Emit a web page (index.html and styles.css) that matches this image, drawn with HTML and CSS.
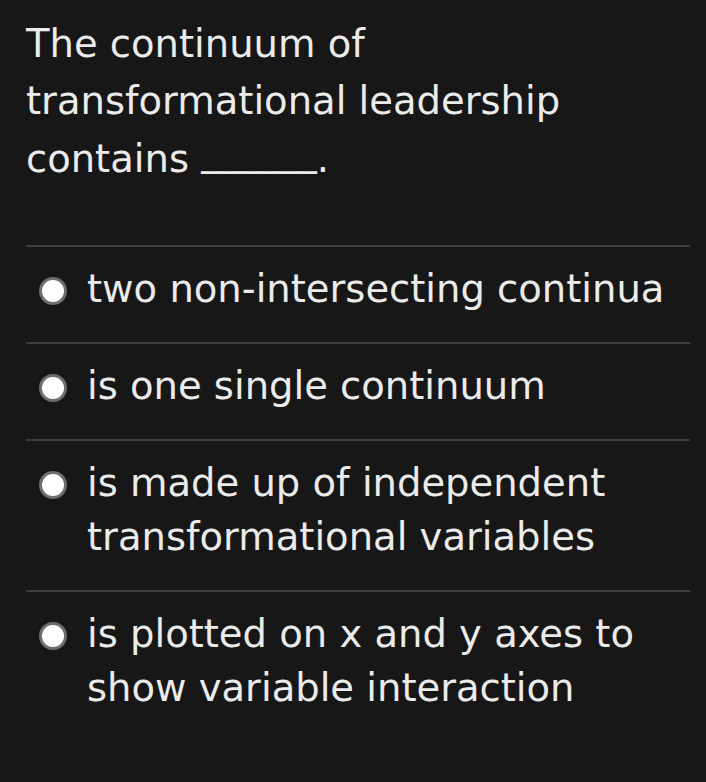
FILE: index.html
```html
<!DOCTYPE html>
<html lang="en">
<head>
<meta charset="utf-8">
<title>Question</title>
<link rel="stylesheet" href="styles.css">
</head>
<body>
<main class="quiz">
  <p class="question"><span class="stem">The continuum of transformational leadership</span> <span class="tail">contains</span> <span class="blank">______</span><span class="dot">.</span></p>
  <ul class="options">
    <li class="option"><span class="radio"></span><span class="label">two non-intersecting continua</span></li>
    <li class="option"><span class="radio"></span><span class="label">is one single continuum</span></li>
    <li class="option"><span class="radio"></span><span class="label">is made up of independent transformational variables</span></li>
    <li class="option"><span class="radio"></span><span class="label">is plotted on x and y axes to show variable interaction</span></li>
  </ul>
</main>
</body>
</html>
```

FILE: styles.css
```css
html, body {
  margin: 0;
  background: #171717;
}

body {
  font-family: "DejaVu Sans", "Liberation Sans", sans-serif;
  color: #ebebeb;
  font-size: 38.5px;
}

.quiz {
  padding: 14.5px 16px 0 26px;
}

.question {
  margin: 0;
  line-height: 57.75px;
  width: 560px;
}

.blank {
  line-height: 0;
  vertical-align: 7px;
}

.options {
  list-style: none;
  margin: 57px 0 0 0;
  padding: 0;
}

.option {
  display: flex;
  align-items: flex-start;
  border-top: 2px solid #3d3d3d;
  padding: 15px 0 26px 0;
  line-height: 54px;
}

.radio {
  flex: none;
  box-sizing: border-box;
  width: 28px;
  height: 28px;
  margin: 15.5px 20.5px 0 12.5px;
  border-radius: 50%;
  background: #ffffff;
  border: 3px solid #6e6e6e;
}

.label {
  flex: 1;
}
```
